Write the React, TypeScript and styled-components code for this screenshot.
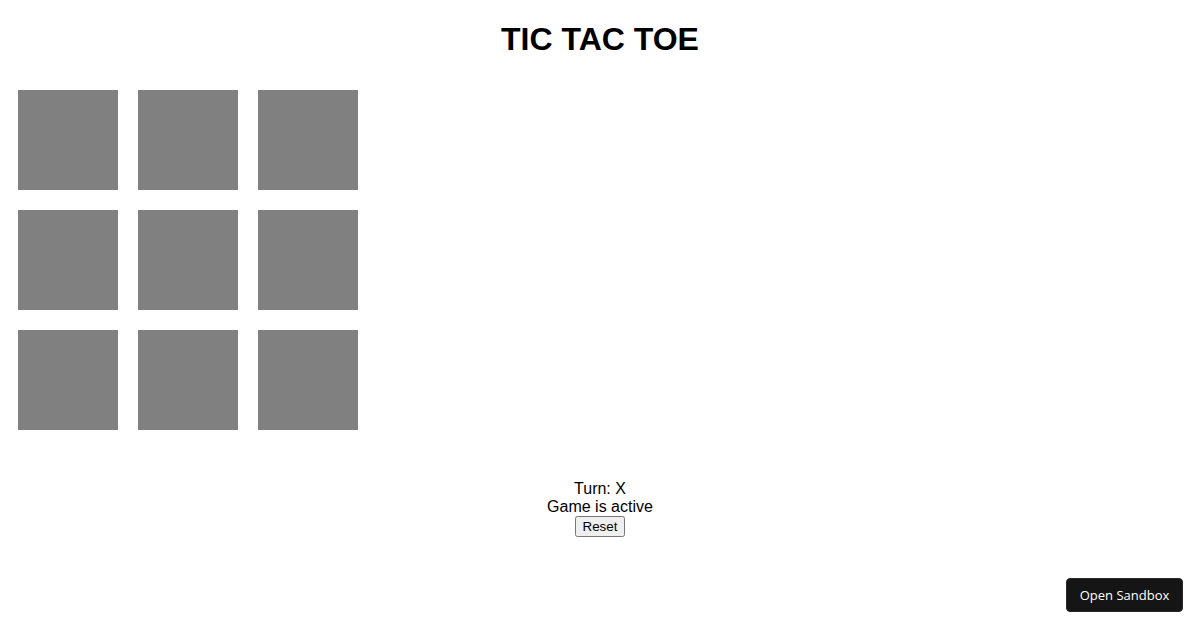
import React, { useState } from "react";
import styled, { createGlobalStyle } from "styled-components";

const GlobalStyle = createGlobalStyle`
  body {
    margin: 0 8px 8px;
    font-family: "Liberation Sans", Arial, sans-serif;
    background: #fff;
    color: #000;
  }
`;

const Title = styled.h1`
  text-align: center;
  font-size: 32px;
  font-weight: bold;
  margin: 21.44px 0;
`;

const Board = styled.div`
  display: flex;
  flex-direction: column;
`;

const Row = styled.div`
  display: flex;
`;

const Cell = styled.div`
  width: 100px;
  height: 100px;
  margin: 10px;
  background: #808080;
  display: flex;
  align-items: center;
  justify-content: center;
  font-size: 48px;
  color: #fff;
  cursor: pointer;
`;

const Info = styled.div`
  margin-top: 40px;
  text-align: center;
  font-size: 16px;
  line-height: 18px;
`;

const ResetButton = styled.button`
  font-family: "Liberation Sans", Arial, sans-serif;
  font-size: 13.33px;
`;

const SandboxButton = styled.button`
  position: fixed;
  right: 17px;
  bottom: 18px;
  width: 117px;
  height: 34px;
  background: #151515;
  color: #fff;
  border: 1px solid #2a2a2a;
  border-radius: 4px;
  font-family: "Open Sans", sans-serif;
  font-size: 13px;
  font-weight: 500;
  cursor: pointer;
`;

const App = () => {
  const [cells, setCells] = useState<string[]>(Array(9).fill(""));
  const [turn, setTurn] = useState("X");

  const play = (i: number) => {
    if (cells[i]) return;
    const next = [...cells];
    next[i] = turn;
    setCells(next);
    setTurn(turn === "X" ? "O" : "X");
  };

  const reset = () => {
    setCells(Array(9).fill(""));
    setTurn("X");
  };

  return (
    <>
      <GlobalStyle />
      <Title>TIC TAC TOE</Title>
      <Board>
        {[0, 1, 2].map(r => (
          <Row key={r}>
            {[0, 1, 2].map(c => (
              <Cell key={c} onClick={() => play(r * 3 + c)}>
                {cells[r * 3 + c]}
              </Cell>
            ))}
          </Row>
        ))}
      </Board>
      <Info>
        <div>Turn: {turn}</div>
        <div>Game is active</div>
        <ResetButton onClick={reset}>Reset</ResetButton>
      </Info>
      <SandboxButton>Open Sandbox</SandboxButton>
    </>
  );
};

export default App;
